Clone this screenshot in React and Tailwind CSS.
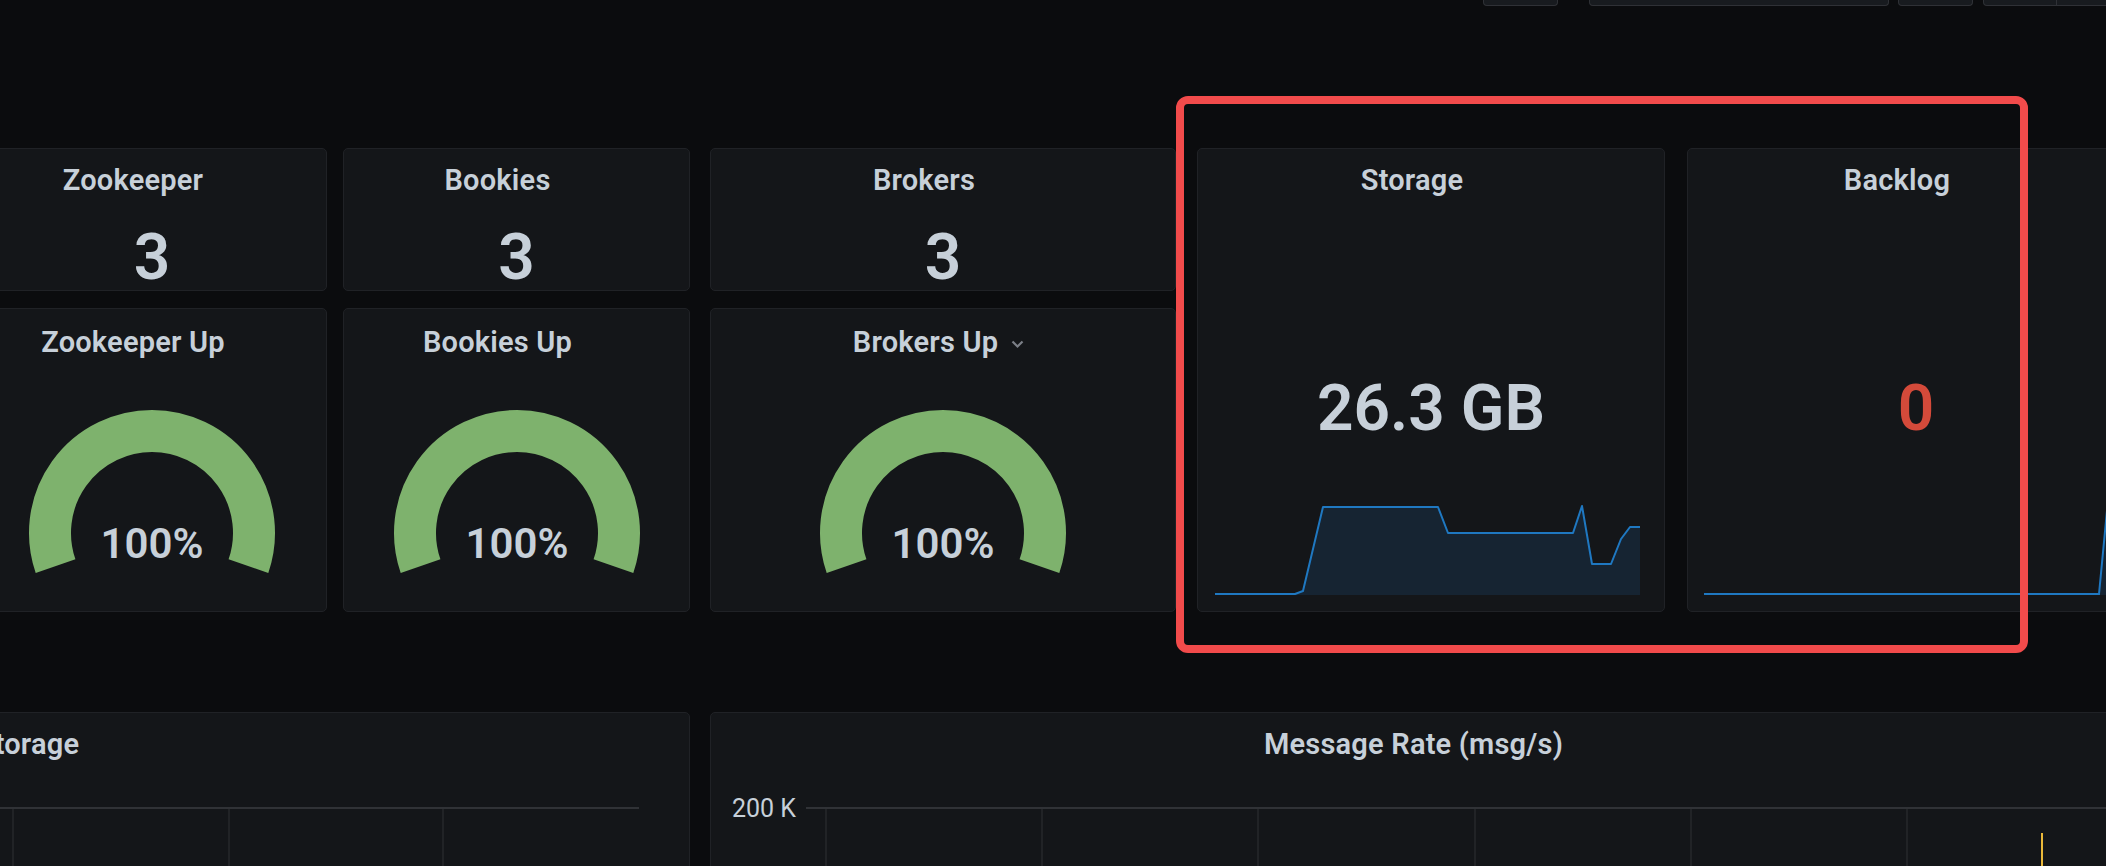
import React from "react";

function Panel({ className = "", children }) {
  return (
    <div
      className={
        "shrink-0 box-border border border-[#202226] bg-[#141619] rounded-[5px] flex flex-col " +
        className
      }
    >
      {children}
    </div>
  );
}

function Title({ children, className = "mt-[16px]" }) {
  return (
    <div
      className={
        "h-[30px] text-[29px] leading-[30px] font-semibold text-center text-[#c7d0d9] pr-[38px] whitespace-nowrap tracking-[0.2px] " +
        className
      }
    >
      {children}
    </div>
  );
}

function StatPanel({ width, title, value }) {
  return (
    <Panel className={width + " h-[143px]"}>
      <Title className="mt-[16px]">{title}</Title>
      <div className="mt-[27px] h-[72px] text-[64px] leading-[72px] font-semibold text-center text-[#c7d0d9]">
        {value}
      </div>
    </Panel>
  );
}

function Gauge() {
  const cx = 130;
  const cy = 130;
  const r = 102;
  const dx = r * Math.cos((19 * Math.PI) / 180);
  const dy = r * Math.sin((19 * Math.PI) / 180);
  return (
    <svg width="260" height="174" viewBox="0 0 260 174" className="mx-auto mt-[46px] block">
      <path
        d={`M ${cx - dx} ${cy + dy} A ${r} ${r} 0 1 1 ${cx + dx} ${cy + dy}`}
        fill="none"
        stroke="#7eb26d"
        strokeWidth="42"
      />
      <text
        x={cx}
        y="155"
        textAnchor="middle"
        fontFamily="Roboto, sans-serif"
        fontWeight="600"
        fontSize="42"
        fill="#c7d0d9"
      >
        100%
      </text>
    </svg>
  );
}

function GaugePanel({ width, title, chevron }) {
  return (
    <Panel className={width + " h-[304px] mt-[17px]"}>
      {chevron ? (
        <div className="mt-[18px] h-[30px] flex items-center justify-center pr-[9px]">
          <span className="text-[29px] leading-[30px] font-semibold text-[#c7d0d9] whitespace-nowrap tracking-[0.2px]">
            {title}
          </span>
          <svg width="13" height="9" viewBox="0 0 13 9" className="ml-[13px] mt-[4px]">
            <path d="M1.5 1.5 L6.5 6.5 L11.5 1.5" fill="none" stroke="#7b7f87" strokeWidth="2.2" />
          </svg>
        </div>
      ) : (
        <Title className="mt-[18px]">{title}</Title>
      )}
      <Gauge />
    </Panel>
  );
}

export default function App() {
  const storageLine = [
    [1215, 594],
    [1295, 594],
    [1303, 591],
    [1323, 507],
    [1438, 507],
    [1448, 533],
    [1573, 533],
    [1582, 506],
    [1592, 564],
    [1611, 564],
    [1621, 539],
    [1630, 527],
    [1640, 527],
  ];
  const storagePath = storageLine.map((p, i) => (i === 0 ? "M" : "L") + p[0] + " " + p[1]).join(" ");
  const storageFill = storagePath + " L1640 595 L1215 595 Z";

  const rightVerticals = [826, 1042, 1258, 1475, 1691, 1907];
  const leftVerticals = [-417, -202, 13, 229, 443];

  return (
    <div className="relative w-[2106px] h-[866px] overflow-hidden bg-[#0b0c0e] font-['Roboto',sans-serif]">
      {/* top toolbar (only bottoms visible) */}
      <div className="flex h-[6px]">
        <div className="shrink-0 ml-[1483px] w-[75px] h-[6px] bg-[#181b1f] border-x border-b border-[#2f3136] rounded-b-[4px]" />
        <div className="shrink-0 ml-[31px] w-[300px] h-[6px] bg-[#181b1f] border-x border-b border-[#2f3136] rounded-b-[4px]" />
        <div className="shrink-0 ml-[9px] w-[75px] h-[6px] bg-[#181b1f] border-x border-b border-[#2f3136] rounded-b-[4px]" />
        <div className="shrink-0 ml-[10px] w-[74px] h-[6px] bg-[#181b1f] border-x border-b border-[#2f3136] rounded-bl-[4px]" />
        <div className="shrink-0 w-[80px] h-[6px] bg-[#181b1f] border-r border-b border-[#2f3136]" />
      </div>

      {/* stat + gauge rows */}
      <div className="flex mt-[142px] ml-[-23px] h-[464px]">
        <div className="flex flex-col shrink-0">
          <StatPanel width="w-[350px]" title="Zookeeper" value="3" />
          <GaugePanel width="w-[350px]" title="Zookeeper Up" />
        </div>
        <div className="flex flex-col shrink-0 ml-[16px]">
          <StatPanel width="w-[347px]" title="Bookies" value="3" />
          <GaugePanel width="w-[347px]" title="Bookies Up" />
        </div>
        <div className="flex flex-col shrink-0 ml-[20px]">
          <StatPanel width="w-[466px]" title="Brokers" value="3" />
          <GaugePanel width="w-[466px]" title="Brokers Up" chevron />
        </div>

        <Panel className="w-[468px] h-[464px] ml-[21px]">
          <Title className="mt-[16px]">Storage</Title>
          <div className="mt-[176px] h-[76px] text-[64px] leading-[76px] font-semibold text-center text-[#c7d0d9] whitespace-nowrap">
            26.3 GB
          </div>
          <svg width="466" height="96" viewBox="1198 500 466 96" className="mt-[53px] block">
            <path d={storageFill} fill="#1f78c1" fillOpacity="0.15" />
            <path d={storagePath} fill="none" stroke="#1f78c1" strokeWidth="2" strokeLinejoin="round" />
          </svg>
        </Panel>

        <Panel className="w-[458px] h-[464px] ml-[22px]">
          <Title className="mt-[16px]">Backlog</Title>
          <div className="mt-[176px] h-[76px] text-[64px] leading-[76px] font-semibold text-center text-[#d44a3a]">
            0
          </div>
          <svg width="456" height="96" viewBox="1688 500 456 96" className="mt-[53px] block">
            <path d="M1704 594 L2099 594 L2108 500 L2112 500 L2112 595 L1704 595 Z" fill="#1f78c1" fillOpacity="0.15" />
            <path d="M1704 594 L2099 594 L2108 500" fill="none" stroke="#1f78c1" strokeWidth="2" />
          </svg>
        </Panel>
      </div>

      {/* bottom graph panels */}
      <div className="flex mt-[100px] ml-[-596px]">
        <Panel className="w-[1286px] h-[220px] overflow-hidden">
          <Title className="mt-[16px]">Storage</Title>
          <svg width="1284" height="80" viewBox="-595 790 1284 80" className="mt-[30px] block">
            <line x1="-400" y1="809" x2="639" y2="809" stroke="#303236" strokeWidth="2" />
            {leftVerticals.map((x) => (
              <line key={x} x1={x} y1="810" x2={x} y2="870" stroke="#2e3034" strokeWidth="1" />
            ))}
          </svg>
        </Panel>
        <Panel className="w-[1445px] h-[220px] ml-[20px] overflow-hidden">
          <Title className="mt-[16px]">Message Rate (msg/s)</Title>
          <svg width="1443" height="80" viewBox="711 790 1443 80" className="mt-[30px] block">
            <text
              x="796"
              y="818"
              textAnchor="end"
              fontFamily="Roboto, sans-serif"
              fontSize="25"
              fill="#c7d0d9"
            >
              200 K
            </text>
            <line x1="806" y1="809" x2="2154" y2="809" stroke="#303236" strokeWidth="2" />
            {rightVerticals.map((x) => (
              <line key={x} x1={x} y1="810" x2={x} y2="870" stroke="#2e3034" strokeWidth="1" />
            ))}
            <line x1="2042" y1="834" x2="2042" y2="870" stroke="#eab839" strokeWidth="2" />
          </svg>
        </Panel>
      </div>

      {/* red highlight annotation */}
      <div className="pointer-events-none absolute left-[1176px] top-[96px] w-[852px] h-[557px] border-[8px] border-[#f24b4b] rounded-[12px]" />
    </div>
  );
}
